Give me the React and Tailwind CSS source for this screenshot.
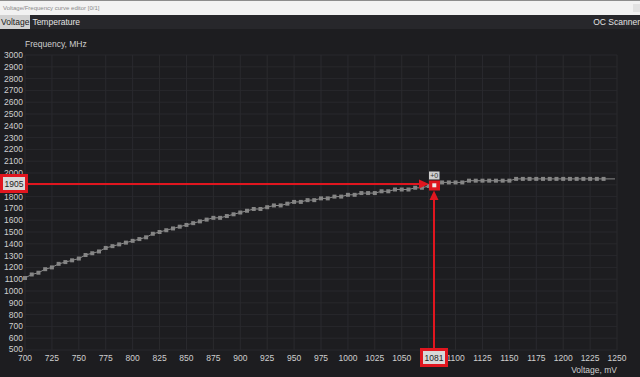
import React from 'react';

const RED = '#e0161f';

// chart mapping
const xOf = (mv) => 25 + (mv - 700) * 1.0764;
const yOf = (mhz) => 350 - (mhz - 500) * 0.118;

// rough shape of the curve, taken as (mV, y px)
const anchors = [
  [700, 277.3], [736, 262.7], [761, 254], [774, 248.3], [800, 240.5],
  [825, 232.7], [850, 225.3], [875, 218.5], [900, 212.5], [925, 207.2],
  [950, 202], [1000, 195], [1050, 189.5], [1075, 186.2], [1081.25, 184.3],
];

const freqAt = (mv) => {
  if (mv > 1081.3) {
    if (mv < 1110) return 1920;
    if (mv < 1153) return 1935;
    return 1950;
  }
  for (let i = 0; i < anchors.length - 1; i++) {
    const [a, ya] = anchors[i];
    const [b, yb] = anchors[i + 1];
    if (mv >= a && mv <= b) {
      const y = ya + ((mv - a) / (b - a)) * (yb - ya);
      const f = 500 + (350 - y) / 0.118;
      return Math.round(f / 15) * 15;
    }
  }
  return 1905;
};

const points = Array.from({ length: 87 }, (_, i) => {
  const mv = 700 + i * 6.25;
  return { mv, x: xOf(mv), y: yOf(freqAt(mv)) };
});

const yTicks = Array.from({ length: 26 }, (_, i) => 500 + i * 100);
const xTicks = Array.from({ length: 23 }, (_, i) => 700 + i * 25);

const Chart = () => {
  const line = points.map((p) => `${p.x.toFixed(1)},${p.y.toFixed(1)}`).join(' ');
  const last = points[points.length - 1];

  return (
    <svg width="640" height="348" viewBox="0 29 640 348" className="block">
      {/* grid */}
      {yTicks.map((v) => (
        <line key={`h${v}`} x1={25} x2={617} y1={yOf(v)} y2={yOf(v)} stroke="#28282c" strokeWidth="1" />
      ))}
      {xTicks.map((v) => (
        <line key={`v${v}`} x1={xOf(v)} x2={xOf(v)} y1={55} y2={350} stroke="#2a2a2e" strokeWidth="1" />
      ))}

      <text x={25} y={47} fontSize="8.5" fill="#cfcfcf">Frequency, MHz</text>
      <text x={617} y={373} fontSize="8.5" fill="#cfcfcf" textAnchor="end">Voltage, mV</text>

      {yTicks.filter((v) => v !== 1900).map((v) => (
        <text key={`yl${v}`} x={23} y={yOf(v) + (v === 500 ? 2 : 3)} fontSize="8.5" fill="#cfcfcf" textAnchor="end">{v}</text>
      ))}
      {xTicks.filter((v) => v !== 1075).map((v) => (
        <text key={`xl${v}`} x={xOf(v)} y={361} fontSize="8.5" fill="#cfcfcf" textAnchor="middle">{v}</text>
      ))}

      {/* curve */}
      <polyline points={`${line} 615,${last.y.toFixed(1)}`} fill="none" stroke="#8a8a8a" strokeWidth="1" />
      {points.map((p) => (
        <rect key={p.mv} x={p.x - 2} y={p.y - 2} width="4" height="4" fill="#858585" />
      ))}

      {/* 1905 label */}
      <rect x={1.5} y={175.5} width={25} height={16} fill="none" stroke={RED} strokeWidth="3" />
      <rect x={3} y={177} width={22} height={13} fill="#d8d8d8" />
      <text x={14} y={187} fontSize="8.5" fill="#222" textAnchor="middle">1905</text>

      {/* horizontal arrow */}
      <line x1={27} x2={421} y1={184} y2={184} stroke={RED} strokeWidth="2" />
      <polygon points="419,179.5 429,184 419,188.5" fill={RED} />

      {/* offset tag */}
      <rect x={429} y={171.5} width={10.5} height={8} fill="#cfcfcf" />
      <text x={434.2} y={178} fontSize="7" fill="#333" textAnchor="middle">+0</text>

      {/* selected point */}
      <rect x={429} y={180.5} width={11} height={10} fill={RED} />
      <rect x={432.3} y={183.3} width={4} height={4} fill="#ececec" />

      {/* vertical arrow */}
      <line x1={434} x2={434} y1={348} y2={199} stroke={RED} strokeWidth="2" />
      <polygon points="429.5,200 434,190.5 438.5,200" fill={RED} />

      {/* 1081 label */}
      <rect x={421.5} y={349.5} width={25} height={16} fill="none" stroke={RED} strokeWidth="3" />
      <rect x={423} y={351} width={22} height={13} fill="#d8d8d8" />
      <text x={434} y={361} fontSize="8.5" fill="#222" textAnchor="middle">1081</text>
    </svg>
  );
};

export default function App() {
  return (
    <div
      className="w-[640px] h-[377px] flex flex-col overflow-hidden bg-[#1d1d20]"
      style={{ fontFamily: '"Liberation Sans", Arial, sans-serif' }}
    >
      {/* window title */}
      <div className="h-[15px] flex items-center justify-between bg-[#f2f2f2] border-t border-[#8c8c8c] pl-[3px]">
        <span className="text-[6px] leading-none text-[#8a8a8a]">Voltage/Frequency curve editor [0/1]</span>
        <span className="w-[7px] h-[8px] bg-[#e2e2e2]" />
      </div>

      {/* tabs */}
      <div className="h-[14px] flex items-stretch bg-[#27272b] text-[8.5px] leading-none">
        <div className="flex items-center px-[1px] bg-[#d2d2d2] text-[#1a1a1a]">Voltage</div>
        <div className="flex items-center px-[2px] text-[#e4e4e4]">Temperature</div>
        <div className="ml-auto flex items-center text-[#e4e4e4]">OC Scanner</div>
      </div>

      <div className="flex-1">
        <Chart />
      </div>
    </div>
  );
}
